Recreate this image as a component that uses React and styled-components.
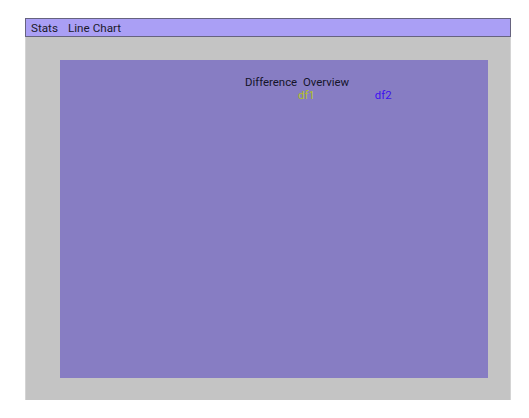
import React from 'react';
import styled, { createGlobalStyle } from 'styled-components';

const GlobalStyle = createGlobalStyle`
  html, body {
    margin: 0;
    padding: 0;
    background: #ffffff;
    font-family: Roboto, "Liberation Sans", sans-serif;
  }
`;

const Frame = styled.div`
  margin: 18px 0 0 25px;
  width: 486px;
`;

const NavBar = styled.nav`
  box-sizing: border-box;
  height: 19px;
  display: flex;
  align-items: center;
  gap: 10px;
  padding: 3px 0 0 5px;
  background: #aa9ff5;
  border: 1px solid #66637f;
  font-size: 11.7px;
  color: #1a1a2a;
`;

const NavItem = styled.span`
  line-height: 1;
`;

const Stage = styled.div`
  box-sizing: border-box;
  height: 363px;
  padding: 23px 23px 22px 35px;
  background: #c4c4c4;
  box-shadow: inset 1px 0 0 #d4d4d4, inset -1px 0 0 #d4d4d4;
`;

const Plot = styled.div`
  height: 100%;
  background: #877dc3;
  padding: 16px 0 0 185px;
  box-sizing: border-box;
`;

const Title = styled.div`
  font-size: 11.4px;
  color: #14142a;
  word-spacing: 3px;
  line-height: 13px;
`;

const Legend = styled.div`
  display: flex;
  padding-left: 53px;
  gap: 60px;
  font-size: 11.4px;
  line-height: 13px;
`;

const LegendItem = styled.span`
  color: ${(p) => p.color};
`;

export default function App() {
  return (
    <>
      <GlobalStyle />
      <Frame>
        <NavBar>
          <NavItem>Stats</NavItem>
          <NavItem>Line Chart</NavItem>
        </NavBar>
        <Stage>
          <Plot>
            <Title>Difference Overview</Title>
            <Legend>
              <LegendItem color="#b3c21d">df1</LegendItem>
              <LegendItem color="#3d10f0">df2</LegendItem>
            </Legend>
          </Plot>
        </Stage>
      </Frame>
    </>
  );
}
